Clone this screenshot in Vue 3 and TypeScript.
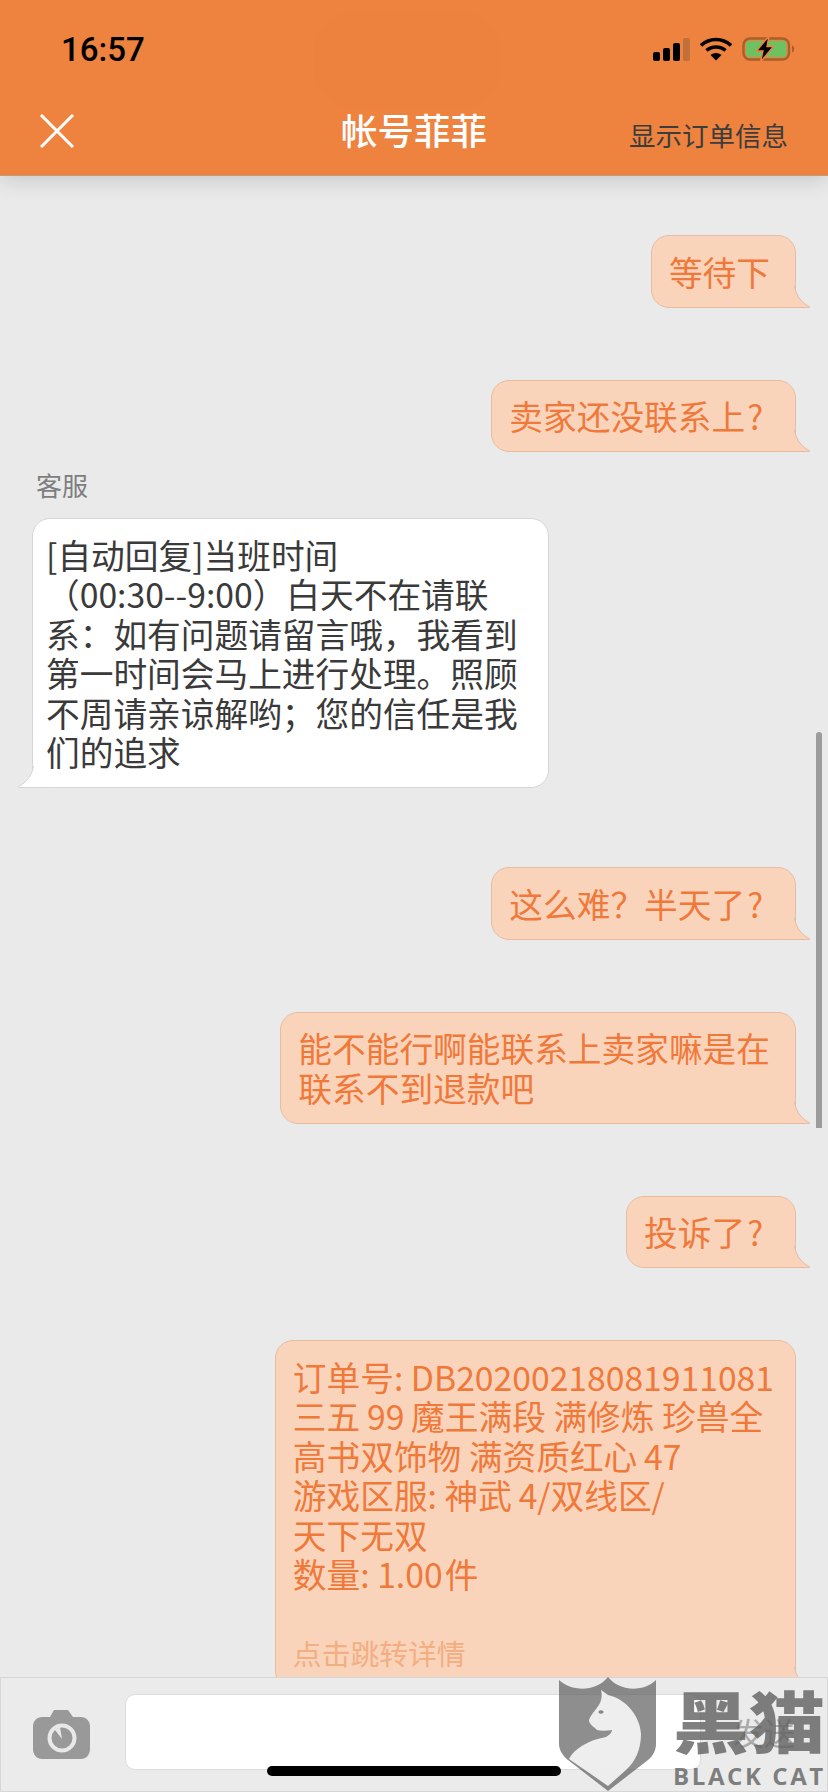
<script setup lang="ts">
interface Message {
  id: number
  incoming?: boolean
  sender?: string
  lines: string[]
  link?: string
}

const messages: Message[] = [
  { id: 1, lines: ['等待下'] },
  { id: 2, lines: ['卖家还没联系上\u200a?\u2009'] },
  {
    id: 3,
    incoming: true,
    sender: '客服',
    lines: [
      '[自动回复]当班时间',
      '（00:30--9:00）白天不在请联',
      '系：如有问题请留言哦，我看到',
      '第一时间会马上进行处理。照顾',
      '不周请亲谅解哟；您的信任是我',
      '们的追求',
    ],
  },
  { id: 4, lines: ['这么难？半天了\u200a?\u2009'] },
  { id: 5, lines: ['能不能行啊能联系上卖家嘛是在', '联系不到退款吧'] },
  { id: 6, lines: ['投诉了\u200a?\u2009'] },
  {
    id: 7,
    lines: [
      '订单号: DB20200218081911081',
      '三五\u200999\u2009魔王满段 满修炼 珍兽全',
      '高书双饰物 满资质红心\u200947',
      '游戏区服: 神武\u20094/双线区/',
      '天下无双',
      '数量: 1.00\u200a件',
      '\u00a0',
    ],
    link: '点击跳转详情',
  },
]
</script>

<template>
  <div class="page">
    <header class="top">
      <div class="notch"></div>
      <div class="status">
        <span class="time">16:57</span>
        <div class="status-icons">
          <svg class="signal" width="37" height="24" viewBox="0 0 37 24">
            <rect x="0" y="15" width="7" height="9" rx="2" fill="#000" />
            <rect x="10" y="11" width="7" height="13" rx="2" fill="#000" />
            <rect x="20" y="6" width="7" height="18" rx="2" fill="#000" />
            <rect x="30" y="1" width="7" height="23" rx="2" fill="#c1703a" />
          </svg>
          <svg class="wifi" width="32" height="24" viewBox="0 0 32 24">
            <path d="M1 8.5C9.5 .5 22.5 .5 31 8.5" fill="none" stroke="#000" stroke-width="3.6" />
            <path d="M6.5 13.5C11.8 8.8 20.2 8.8 25.5 13.5" fill="none" stroke="#000" stroke-width="3.6" />
            <path d="M10.5 18L16 23.5L21.5 18C18.4 15.2 13.6 15.2 10.5 18Z" fill="#000" />
          </svg>
          <svg class="battery" width="54" height="24" viewBox="0 0 54 24">
            <rect x="1.5" y="1.5" width="45.5" height="21" rx="6.5" fill="none" stroke="#a85f2e" stroke-width="2.4" />
            <rect x="4" y="4" width="40.5" height="16" rx="3" fill="#6cc160" />
            <path d="M50 8.5C53 9 53 15 50 15.5Z" fill="#a85f2e" />
            <path d="M27 -1L14.5 14H21L18.5 25L31.5 9.5H25Z" fill="#000" stroke="#ee823f" stroke-width="1.4" />
          </svg>
        </div>
      </div>
      <nav class="nav">
        <svg class="close" width="34" height="34" viewBox="0 0 34 34">
          <path d="M1 1L33 33M33 1L1 33" fill="none" stroke="#fff" stroke-width="3" />
        </svg>
        <div class="title">帐号菲菲</div>
        <div class="nav-action">显示订单信息</div>
      </nav>
    </header>

    <main class="messages">
      <div
        v-for="m in messages"
        :key="m.id"
        class="msg"
        :class="m.incoming ? 'in' : 'out'"
      >
        <div v-if="m.sender" class="sender">{{ m.sender }}</div>
        <div class="bubble" :class="{ order: m.link }">
          <div v-for="(line, i) in m.lines" :key="i">{{ line }}</div>
          <div v-if="m.link" class="link">{{ m.link }}</div>
          <svg class="tail" width="30" height="24" viewBox="0 0 30 24">
            <path d="M14.5 2C16 12 22 19 29.5 22.5V23.5H0" />
          </svg>
        </div>
      </div>
    </main>

    <div class="scrollbar"></div>

    <footer class="bar">
      <div class="camera">
        <svg width="57" height="49" viewBox="0 0 57 49">
          <path d="M21 0H35L40 7H48C53 7 57 11 57 16V39C57 45 53 49 48 49H9C4 49 0 45 0 39V16C0 11 4 7 9 7H17Z" fill="#999" />
          <circle cx="29" cy="28" r="12.5" fill="none" stroke="#e8e8e8" stroke-width="4" />
          <path d="M22 20L29 29L27 17Z" fill="#e8e8e8" />
        </svg>
      </div>
      <div class="input"></div>
      <div class="send">发送</div>
    </footer>

    <div class="home"></div>

    <div class="mark">
      <svg class="shield" width="115" height="120" viewBox="0 0 115 120">
        <path d="M9 8C22 20 46 20 58 5C70 20 94 20 106 8V72C106 78 103 84 98 88L58 119L18 88C13 84 9 78 9 72Z" fill="rgba(88,88,88,.68)" />
        <path d="M51 18L58 23C76 27 90 44 91 62C91 78 85 90 76 98L58 114L19 87C24 77 38 68 56 65C59 63 62 61 62 58C56 59 51 59 47 58C43 54 39 52 39 48C41 42 47 37 50 31C52 27 52 22 51 18Z" fill="rgba(255,255,255,.85)" />
        <ellipse cx="51" cy="40" rx="2.6" ry="1.8" fill="rgba(88,88,88,.7)" />
      </svg>
      <div class="mark-text">
        <div class="mark-cn">黑猫</div>
        <div class="mark-en">BLACK CAT</div>
      </div>
    </div>
  </div>
</template>

<style>
html,
body {
  margin: 0;
  background: #eaeaea;
}
</style>

<style scoped>
.page {
  position: relative;
  width: 828px;
  height: 1792px;
  overflow: hidden;
  display: flex;
  flex-direction: column;
  background: #eaeaea;
  font-family: "Noto Sans CJK SC", "Liberation Sans", sans-serif;
}

.top {
  position: relative;
  z-index: 2;
  height: 176px;
  flex: none;
  background: #ee823f;
  border-bottom: 1px solid #c49a80;
  box-sizing: border-box;
  box-shadow: 0 3px 22px rgba(0, 0, 0, 0.16);
}

.notch {
  position: absolute;
  left: 314px;
  top: 12px;
  width: 186px;
  height: 96px;
  border-radius: 40px;
  background: rgba(230, 120, 55, 0.12);
}

.status {
  position: relative;
  height: 88px;
  display: flex;
  justify-content: space-between;
  align-items: flex-start;
  padding: 0 32px 0 61px;
}

.time {
  margin-top: 30px;
  font: 500 33px/39px Roboto, "Liberation Sans", sans-serif;
  color: #000;
}

.status-icons {
  display: flex;
  align-items: flex-start;
  margin-top: 37px;
}

.signal {
  margin-right: 10px;
}

.wifi {
  margin-right: 10px;
}

.nav {
  position: relative;
  height: 87px;
  display: grid;
  grid-template-columns: 1fr auto 1fr;
  align-items: center;
  padding: 0 40px;
}

.close {
  margin-top: -2px;
}

.title {
  font-size: 36.5px;
  font-weight: 500;
  line-height: 44px;
  color: #fff;
  margin-top: -3px;
}

.nav-action {
  justify-self: end;
  font-size: 26.5px;
  line-height: 34px;
  color: #3c3c3c;
  margin-top: 6px;
}

.messages {
  flex: 1;
  min-height: 0;
  overflow: hidden;
  padding-top: 59px;
  display: flex;
  flex-direction: column;
  gap: 72px;
}

.msg {
  display: flex;
  flex-direction: column;
  flex: none;
}

.msg.out {
  align-items: flex-end;
  padding-right: 32px;
}

.msg.in {
  align-items: flex-start;
  margin: -56px 0 7px;
  padding-left: 32px;
}

.sender {
  margin: 0 0 16px 4px;
  font-size: 26px;
  line-height: 34px;
  color: #7e7e7e;
}

.bubble {
  position: relative;
  padding: 15.5px 25px 15.5px 17px;
  border: 1px solid #e6bda3;
  border-radius: 18px;
  background: #f9d4bb;
  color: #f0793a;
  font-size: 33.7px;
  line-height: 39.5px;
  white-space: nowrap;
}

.bubble.order {
  padding-right: 21px;
}

.in .bubble {
  padding: 15.5px 30px 15.5px 13px;
  border-color: #d6d6d6;
  background: #fff;
  color: #3a3a3a;
}

.link {
  color: #f3ae82;
  font-size: 28.8px;
}

.tail {
  position: absolute;
  right: -15px;
  bottom: -1px;
}

.tail path {
  fill: #f9d4bb;
  stroke: #e6bda3;
  stroke-width: 1;
}

.in .tail {
  right: auto;
  left: -15px;
  transform: scaleX(-1);
}

.in .tail path {
  fill: #fff;
  stroke: #d6d6d6;
}

.scrollbar {
  position: absolute;
  right: 6px;
  top: 732px;
  width: 6px;
  height: 396px;
  border-radius: 3px 3px 0 0;
  background: #9c9c9c;
}

.bar {
  position: relative;
  z-index: 1;
  height: 115px;
  flex: none;
  box-sizing: border-box;
  display: flex;
  align-items: flex-start;
  background: #ebebeb;
  border: 1px solid #d6d6d6;
}

.camera {
  width: 124px;
  padding: 32px 0 0 32px;
  box-sizing: border-box;
}

.camera svg {
  display: block;
}

.input {
  width: 576px;
  height: 76px;
  margin-top: 16px;
  box-sizing: border-box;
  border: 1px solid #dcdcdc;
  border-radius: 10px;
  background: #fff;
}

.send {
  flex: 1;
  margin-top: 34px;
  text-align: center;
  font-size: 31px;
  line-height: 40px;
  color: #aaa;
}

.home {
  position: absolute;
  z-index: 3;
  left: 267px;
  bottom: 16px;
  width: 294px;
  height: 10px;
  border-radius: 5px;
  background: #000;
}

.mark {
  position: absolute;
  z-index: 4;
  left: 550px;
  bottom: 0;
  display: flex;
  align-items: flex-end;
}

.shield {
  display: block;
}

.mark-text {
  margin-left: 8px;
  width: 154px;
  color: rgba(96, 96, 96, 0.8);
  padding-bottom: 6px;
}

.mark-cn {
  font-size: 76px;
  font-weight: 900;
  line-height: 78px;
  white-space: nowrap;
  transform: scaleY(0.88);
}

.mark-en {
  margin-top: 8px;
  font: 700 24px/20px "Open Sans", sans-serif;
  letter-spacing: 2.6px;
  white-space: nowrap;
}
</style>
